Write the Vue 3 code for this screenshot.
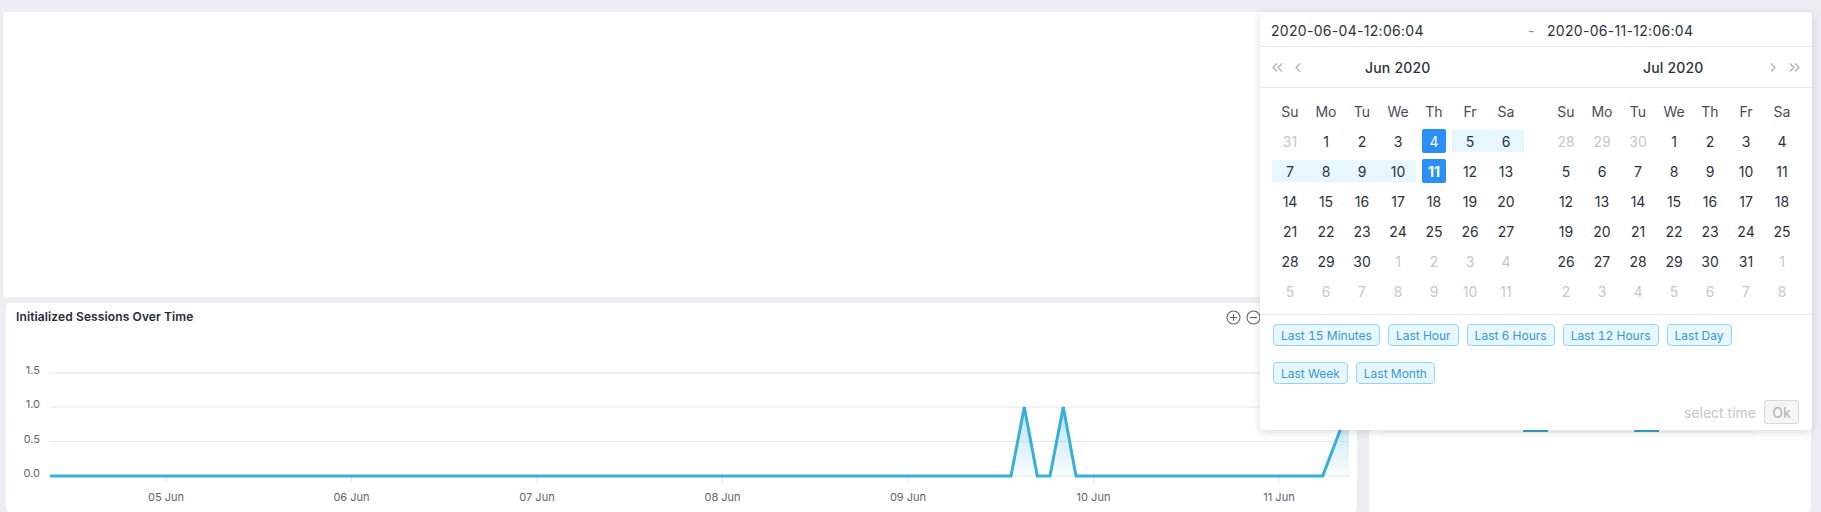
<script setup>
import { computed } from 'vue';

const weekdays = ['Su', 'Mo', 'Tu', 'We', 'Th', 'Fr', 'Sa'];
const presetRows = [
  ['Last 15 Minutes', 'Last Hour', 'Last 6 Hours', 'Last 12 Hours', 'Last Day'],
  ['Last Week', 'Last Month']
];

// month: 0-based, 2020 is fixed since the range never leaves June
const buildCells = (month, isLeft) => {
  const first = new Date(2020, month, 1);
  const start = new Date(2020, month, 1 - first.getDay());
  const cells = [];
  for (let i = 0; i < 42; i++) {
    const d = new Date(start.getFullYear(), start.getMonth(), start.getDate() + i);
    const inMonth = d.getMonth() === month;
    const day = d.getDate();
    cells.push({
      key: i,
      day,
      muted: !inMonth,
      start: isLeft && inMonth && day === 4,
      end: isLeft && inMonth && day === 11,
      range: isLeft && inMonth && day > 4 && day < 11
    });
  }
  return cells;
};

const leftCells = computed(() => buildCells(5, true));
const rightCells = computed(() => buildCells(6, false));

const yTicks = [
  { label: '1.5', y: 373 },
  { label: '1.0', y: 407 },
  { label: '0.5', y: 441.5 },
  { label: '0.0', y: 476 }
];
const xTicks = ['05 Jun', '06 Jun', '07 Jun', '08 Jun', '09 Jun', '10 Jun', '11 Jun'].map((label, i) => ({
  label,
  x: 166 + i * 185.5
}));

const linePoints = [
  [50, 476], [1011, 476], [1024.3, 407], [1037.3, 476], [1050, 476],
  [1063.3, 407], [1076, 476], [1322.7, 476], [1349, 407]
];
const linePath = computed(() => linePoints.map((p, i) => `${i ? 'L' : 'M'}${p[0]} ${p[1]}`).join(' '));
const areaPath = computed(() => `${linePath.value} L1349 476 Z`);
</script>

<template>
  <div class="page">
    <div class="card top-card"></div>

    <div class="bottom-row">
      <section class="card chart-card">
        <header class="chart-head">
          <h3 class="chart-title">Initialized Sessions Over Time</h3>
          <div class="zoom-icons">
            <svg width="15" height="15" viewBox="0 0 15 15">
              <circle cx="7.5" cy="7.5" r="6.5" />
              <path d="M7.5 4v7M4 7.5h7" />
            </svg>
            <svg width="15" height="15" viewBox="0 0 15 15">
              <circle cx="7.5" cy="7.5" r="6.5" />
              <path d="M4 7.5h7" />
            </svg>
          </div>
        </header>
        <svg class="chart" width="1351" height="184" viewBox="6 328 1351 184">
          <defs>
            <linearGradient id="areaFill" x1="0" y1="0" x2="0" y2="1">
              <stop offset="0" stop-color="#9ed8f0" stop-opacity="0.75" />
              <stop offset="1" stop-color="#9ed8f0" stop-opacity="0.05" />
            </linearGradient>
          </defs>
          <g v-for="t in yTicks" :key="t.label">
            <line x1="50" x2="1349" :y1="t.y" :y2="t.y" class="grid" />
            <text x="40" :y="t.y + 1" text-anchor="end" class="axis">{{ t.label }}</text>
          </g>
          <g v-for="t in xTicks" :key="t.label">
            <line :x1="t.x" :x2="t.x" y1="476" y2="483" class="grid" />
            <text :x="t.x" y="501" text-anchor="middle" class="axis">{{ t.label }}</text>
          </g>
          <path :d="areaPath" fill="url(#areaFill)" />
          <path :d="linePath" class="series" />
        </svg>
      </section>

      <section class="card side-card">
        <svg width="442" height="209" viewBox="1369 303 442 209">
          <line x1="1381" x2="1755" y1="432" y2="432" class="side-line" />
          <rect x="1523" y="429" width="25" height="3" class="side-bar" />
          <rect x="1634" y="429" width="25" height="3" class="side-bar" />
        </svg>
      </section>
    </div>

    <div class="picker">
      <div class="picker-inputs">
        <span class="input-value">2020-06-04-12:06:04</span>
        <span class="input-sep">-</span>
        <span class="input-value">2020-06-11-12:06:04</span>
      </div>

      <div class="picker-head">
        <div class="head-side">
          <div class="nav">
            <svg width="11" height="9" viewBox="0 0 11 9"><path d="M5 .5 1 4.5l4 4M10 .5l-4 4 4 4" /></svg>
            <svg width="6" height="9" viewBox="0 0 6 9"><path d="M5 .5 1 4.5l4 4" /></svg>
          </div>
          <span class="month">Jun 2020</span>
        </div>
        <div class="head-side">
          <span class="month">Jul 2020</span>
          <div class="nav nav-right">
            <svg width="6" height="9" viewBox="0 0 6 9"><path d="m1 .5 4 4-4 4" /></svg>
            <svg width="11" height="9" viewBox="0 0 11 9"><path d="m1 .5 4 4-4 4M6 .5l4 4-4 4" /></svg>
          </div>
        </div>
      </div>

      <div class="panels">
        <div class="panel">
          <span v-for="w in weekdays" :key="w" class="weekday">{{ w }}</span>
          <span
            v-for="c in leftCells"
            :key="c.key"
            class="cell"
            :class="{ 'cell--muted': c.muted, 'cell--range': c.range, 'cell--start': c.start, 'cell--end': c.end }"
          >
            <span class="cell-num">{{ c.day }}</span>
          </span>
        </div>
        <div class="panel">
          <span v-for="w in weekdays" :key="w" class="weekday">{{ w }}</span>
          <span
            v-for="c in rightCells"
            :key="c.key"
            class="cell"
            :class="{ 'cell--muted': c.muted }"
          >
            <span class="cell-num">{{ c.day }}</span>
          </span>
        </div>
      </div>

      <div class="presets">
        <div v-for="(row, i) in presetRows" :key="i" class="preset-row">
          <span v-for="p in row" :key="p" class="preset">{{ p }}</span>
        </div>
      </div>

      <div class="picker-foot">
        <span class="foot-text">select time</span>
        <span class="ok">Ok</span>
      </div>
    </div>
  </div>
</template>

<style scoped>
.page {
  position: relative;
  box-sizing: border-box;
  width: 1821px;
  height: 512px;
  padding: 12px 10px 0 3px;
  overflow: hidden;
  background: #ebeef3;
  font-family: Inter, "Liberation Sans", sans-serif;
}

.card {
  background: #fff;
  border-radius: 4px;
}

.top-card {
  height: 285px;
}

.bottom-row {
  display: flex;
  gap: 12px;
  margin-top: 6px;
  padding-left: 3px;
}

.chart-card {
  width: 1351px;
  height: 209px;
}

.chart-head {
  display: flex;
  justify-content: space-between;
  height: 25px;
  padding: 4px 96px 0 10px;
  box-sizing: border-box;
}

.chart-title {
  margin: 3px 0 0;
  font-size: 12px;
  line-height: 14px;
  font-weight: 600;
  letter-spacing: 0.12px;
  color: #1f2a3d;
}

.zoom-icons {
  display: flex;
  gap: 5px;
  height: 15px;
  margin-top: 3px;
}

.zoom-icons svg {
  fill: none;
  stroke: #5f6368;
  stroke-width: 1.1;
}

.chart {
  display: block;
}

.grid {
  stroke: #e6e6e6;
  stroke-width: 1;
}

.axis {
  font-size: 11px;
  fill: #60646b;
}

.series {
  fill: none;
  stroke: #37afd6;
  stroke-width: 3;
  stroke-linejoin: miter;
}

.side-card {
  width: 442px;
  height: 209px;
}

.side-line {
  stroke: #f3f3f3;
  stroke-width: 1;
}

.side-bar {
  fill: #37a5cc;
}

.picker {
  position: absolute;
  left: 1260px;
  top: 12px;
  width: 552px;
  height: 418px;
  background: #fff;
  border-radius: 4px;
  box-shadow: 0 2px 8px rgba(0, 0, 0, 0.15);
  color: #2a3240;
  font-size: 14px;
}

.picker-inputs {
  display: flex;
  align-items: center;
  height: 35px;
  margin-left: 1px;
  padding: 3px 0 0 10px;
  box-sizing: border-box;
  border-bottom: 1px solid #e8e8e8;
}

.input-value {
  width: 240px;
  letter-spacing: 0.3px;
}

.input-value:first-child {
  width: 257px;
}

.input-sep {
  width: 19px;
  color: #8a8f96;
}

.picker-head {
  display: flex;
  height: 41px;
  margin-left: 1px;
  box-sizing: border-box;
  border-bottom: 1px solid #e8e8e8;
}

.head-side {
  position: relative;
  display: flex;
  flex: 1;
  align-items: center;
  justify-content: center;
}

.head-side:first-child {
  padding-right: 2px;
}

.head-side:last-child {
  padding-right: 2px;
}

.month {
  font-weight: 500;
  letter-spacing: 0.2px;
}

.nav {
  position: absolute;
  left: 11px;
  top: 16px;
  display: flex;
  align-items: center;
  gap: 12px;
}

.nav-right {
  left: auto;
  right: 12px;
  gap: 13px;
}

.nav svg {
  fill: none;
  stroke: #a9adb3;
  stroke-width: 1.1;
}

.panels {
  display: flex;
  padding: 8px 12px;
  gap: 24px;
  border-bottom: 1px solid #e8e8e8;
}

.panel {
  display: grid;
  grid-template-columns: repeat(7, 36px);
  grid-auto-rows: 30px;
}

.weekday,
.cell {
  display: flex;
  align-items: center;
  justify-content: center;
}

.weekday {
  color: #454c58;
}

.cell--muted {
  color: #c6c8cc;
}

.cell--range {
  background: linear-gradient(#e6f7ff, #e6f7ff) center / 100% 22px no-repeat;
}

.cell--start .cell-num,
.cell--end .cell-num {
  display: flex;
  align-items: center;
  justify-content: center;
  width: 24px;
  height: 24px;
  border-radius: 2px;
  background: #2a8ff7;
  color: #fff;
}

.cell--end .cell-num {
  font-weight: 700;
}

.presets {
  padding: 9px 13px 0;
}

.preset-row {
  display: flex;
  gap: 8px;
  margin-bottom: 16px;
}

.preset {
  display: flex;
  align-items: center;
  height: 22px;
  box-sizing: border-box;
  padding: 0 7px;
  border: 1px solid #91d5ff;
  border-radius: 4px;
  background: #e6f7ff;
  color: #3a97dc;
  font-size: 12px;
  font-variant-numeric: tabular-nums;
}

.picker-foot {
  display: flex;
  align-items: center;
  justify-content: flex-end;
  gap: 8px;
  padding-right: 13px;
}

.foot-text {
  color: #c4c6ca;
}

.ok {
  display: flex;
  align-items: center;
  justify-content: center;
  width: 35px;
  height: 24px;
  box-sizing: border-box;
  border: 1px solid #d9d9d9;
  border-radius: 3px;
  background: #f5f5f5;
  color: #b8b8b8;
  font-weight: 500;
}
</style>
